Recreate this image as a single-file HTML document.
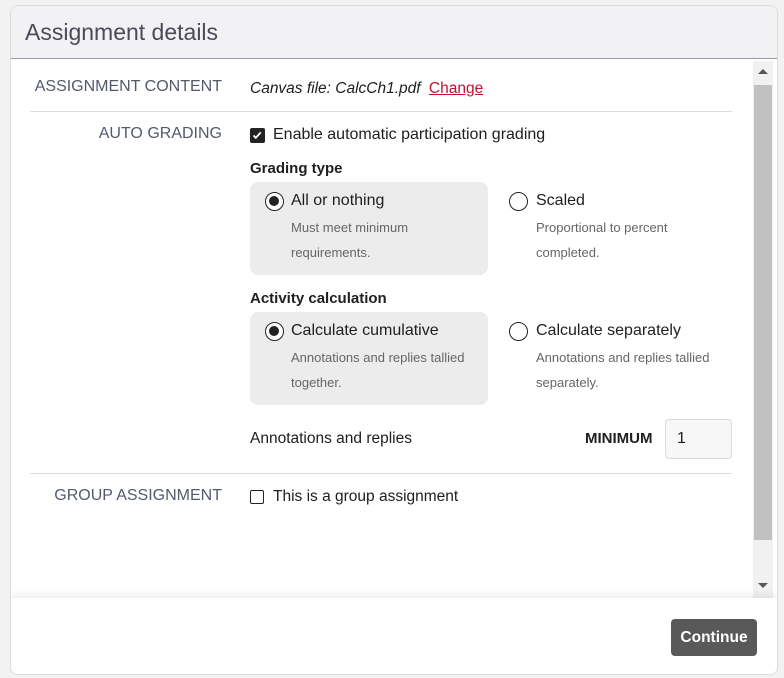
<!DOCTYPE html>
<html><head><meta charset="utf-8"><style>
*{box-sizing:border-box;margin:0;padding:0}
body{width:784px;height:678px;background:#f2f2f2;font-family:"Liberation Sans",sans-serif;position:relative;overflow:hidden;color:#202020}
.card{position:absolute;left:10px;top:5px;width:768px;height:670px;background:#fff;border:1px solid #dcdcdc;border-radius:8px;overflow:hidden}
.in{position:absolute;left:-1px;top:0;width:768px;height:670px}
.hdr{position:absolute;left:0;top:0;width:100%;height:53px;background:#f2f2f4;border-bottom:1px solid #9a9aa8}
.hdr h1{position:absolute;left:15px;top:13px;font-size:23px;font-weight:normal;color:#4a4a58}
.a{position:absolute;white-space:nowrap}
.lbl{font-size:16px;color:#535a6e;text-align:right;width:212px;left:0}
.hr{position:absolute;left:20px;width:702px;height:1px;background:#dcdcdc}
.box{position:absolute;background:#ececec;border-radius:8px}
.radio{position:absolute;width:19px;height:19px;border:1.5px solid #222;border-radius:50%;background:#fff}
.radio.on::after{content:"";position:absolute;left:3px;top:3px;width:10px;height:10px;border-radius:50%;background:#222}
.t16{font-size:16px;color:#202020}
.sm{font-size:13px;color:#666;line-height:25px}
.b{font-weight:bold;font-size:15px}
.cb{position:absolute;width:15px;height:15px;border:1.5px solid #222;border-radius:2px;background:#fff}
</style></head><body>
<div class="card"><div class="in">
<div class="hdr"><h1>Assignment details</h1></div>
<div class="a lbl" style="top:72px">ASSIGNMENT CONTENT</div>
<div class="a t16" style="left:240px;top:74px;font-style:italic;font-size:15.5px">Canvas file: CalcCh1.pdf <span style="font-style:normal;color:#c0142d;text-decoration:underline;margin-left:4px">Change</span></div>
<div class="hr" style="top:105px"></div>
<div class="a lbl" style="top:119px">AUTO GRADING</div>
<div class="cb" style="left:240px;top:122px;background:#222"><svg width="12" height="12" viewBox="0 0 12 12" style="position:absolute;left:0;top:0"><path d="M2.5 6.5l2.3 2.3L9.8 3.3" stroke="#fff" stroke-width="1.8" fill="none"/></svg></div>
<div class="a t16" style="left:263px;top:120px">Enable automatic participation grading</div>
<div class="a b" style="left:240px;top:154px">Grading type</div>
<div class="box" style="left:240px;top:176px;width:238px;height:93px"></div>
<div class="radio on" style="left:255px;top:186px"></div>
<div class="a t16" style="left:281px;top:186px">All or nothing</div>
<div class="a sm" style="left:281px;top:209px">Must meet minimum<br>requirements.</div>
<div class="radio" style="left:499px;top:186px"></div>
<div class="a t16" style="left:526px;top:186px">Scaled</div>
<div class="a sm" style="left:526px;top:209px">Proportional to percent<br>completed.</div>
<div class="a b" style="left:240px;top:284px">Activity calculation</div>
<div class="box" style="left:240px;top:306px;width:238px;height:93px"></div>
<div class="radio on" style="left:255px;top:316px"></div>
<div class="a t16" style="left:281px;top:316px">Calculate cumulative</div>
<div class="a sm" style="left:281px;top:339px">Annotations and replies tallied<br>together.</div>
<div class="radio" style="left:499px;top:316px"></div>
<div class="a t16" style="left:526px;top:316px">Calculate separately</div>
<div class="a sm" style="left:526px;top:339px">Annotations and replies tallied<br>separately.</div>
<div class="a" style="left:240px;top:424px;font-size:15.5px">Annotations and replies</div>
<div class="a" style="left:575px;top:424px;font-size:15px;font-weight:bold">MINIMUM</div>
<div class="a" style="left:655px;top:413px;width:67px;height:40px;border:1px solid #dcdcdc;border-radius:4px;background:#f7f7f7;font-size:16px;padding:10px 0 0 11px">1</div>
<div class="hr" style="top:467px"></div>
<div class="a lbl" style="top:481px">GROUP ASSIGNMENT</div>
<div class="cb" style="left:240px;top:484px;width:14px;height:14px;border-width:1.5px"></div>
<div class="a t16" style="left:263px;top:482px;font-size:15.5px">This is a group assignment</div>
<div class="a" style="left:743px;top:55px;width:20px;height:538px;background:#f1f1f1"></div>
<div class="a" style="left:744px;top:79px;width:18px;height:455px;background:#c1c1c1"></div>
<div class="a" style="left:748px;top:63px;width:0;height:0;border:5px solid transparent;border-bottom:5px solid #555;border-top:0"></div>
<div class="a" style="left:748px;top:577px;width:0;height:0;border:5px solid transparent;border-top:5px solid #555;border-bottom:0"></div>
<div class="a" style="left:0;top:592px;width:100%;height:78px;background:#fff;box-shadow:0 -4px 6px rgba(0,0,0,0.06)"></div>
<div class="a" style="left:661px;top:613px;width:86px;height:37px;background:#595959;border-radius:4px;color:#fff;font-weight:bold;font-size:15.5px;text-align:center;line-height:37px">Continue</div>
</div></div>
</body></html>
